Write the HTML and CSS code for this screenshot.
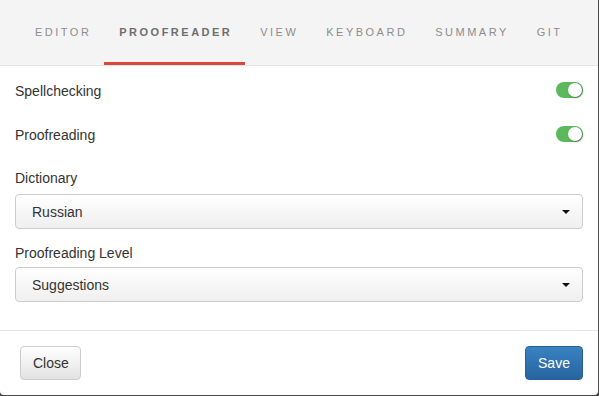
FILE: index.html
```html
<!DOCTYPE html>
<html>
<head>
<meta charset="utf-8">
<link rel="stylesheet" href="styles.css">
</head>
<body>
<div class="modal">
  <nav class="tabs">
    <span class="tab">Editor</span>
    <span class="tab active">Proofreader</span>
    <span class="tab">View</span>
    <span class="tab">Keyboard</span>
    <span class="tab">Summary</span>
    <span class="tab">Git</span>
  </nav>
  <div class="content">
    <div class="switch-row first">
      <span class="label">Spellchecking</span>
      <span class="toggle"><span class="knob"></span></span>
    </div>
    <div class="switch-row second">
      <span class="label">Proofreading</span>
      <span class="toggle"><span class="knob"></span></span>
    </div>
    <div class="field dict">
      <div class="label">Dictionary</div>
      <div class="select"><span>Russian</span><span class="caret"></span></div>
    </div>
    <div class="field level">
      <div class="label">Proofreading Level</div>
      <div class="select"><span>Suggestions</span><span class="caret"></span></div>
    </div>
  </div>
  <div class="footer">
    <button class="btn btn-default">Close</button>
    <button class="btn btn-primary">Save</button>
  </div>
</div>
</body>
</html>
```
FILE: styles.css
```css
html, body {
  margin: 0;
  padding: 0;
}
body {
  background: #4b4b4b;
  font-family: "Liberation Sans", Arial, sans-serif;
  color: #333;
  width: 599px;
  height: 396px;
  overflow: hidden;
}
.modal {
  width: 598px;
  height: 395px;
  background: #fff;
  border-radius: 0 0 4px 4px;
  display: flex;
  flex-direction: column;
  overflow: hidden;
}
.tabs {
  display: flex;
  height: 65px;
  padding-left: 20px;
  background: #f4f4f4;
  border-bottom: 1px solid #e4e4e4;
}
.tab {
  box-sizing: border-box;
  height: 65px;
  padding: 1px 12.75px 0 15.15px;
  display: flex;
  align-items: center;
  text-transform: uppercase;
  font-size: 11px;
  letter-spacing: 2.5px;
  color: #8c8c8c;
  border-bottom: 3px solid transparent;
}
.tab:first-child {
  padding-left: 15px;
}
.tab.active {
  font-weight: bold;
  color: #6e6e6e;
  border-bottom-color: #d9483b;
}
.content {
  padding: 15px 15px 28px 15px;
  font-size: 14px;
  line-height: 20px;
}
.switch-row {
  display: flex;
  justify-content: space-between;
  align-items: center;
  height: 20px;
}
.switch-row.second {
  margin-top: 24px;
}
.toggle {
  width: 27px;
  height: 16px;
  border-radius: 8px;
  background: #5cb85c;
  position: relative;
  margin-top: -2px;
}
.knob {
  position: absolute;
  right: 1px;
  top: 1px;
  width: 14px;
  height: 14px;
  border-radius: 50%;
  background: #fff;
  box-shadow: 1px 1px 2px rgba(0,0,0,0.35);
}
.field.dict {
  margin-top: 23px;
}
.field.level {
  margin-top: 14px;
}
.field .label {
  margin-bottom: 6px;
}
.field.level .label {
  margin-bottom: 4px;
}
.select {
  box-sizing: border-box;
  height: 35px;
  border: 1px solid #ccc;
  border-radius: 4px;
  background: linear-gradient(#ffffff, #efefef);
  display: flex;
  align-items: center;
  justify-content: space-between;
  padding: 0 12px 0 16px;
  color: #333;
}
.caret {
  width: 0;
  height: 0;
  border-left: 4px solid transparent;
  border-right: 4px solid transparent;
  border-top: 4px solid #111;
}
.footer {
  border-top: 1px solid #e5e5e5;
  padding: 15px 15px 15px 20px;
  display: flex;
  justify-content: space-between;
}
.btn {
  font-family: "Liberation Sans", Arial, sans-serif;
  font-size: 14px;
  line-height: 20px;
  padding: 6px 12px;
  border-radius: 4px;
  margin: 0;
}
.btn-default {
  color: #333;
  border: 1px solid #ccc;
  background: linear-gradient(#ffffff, #e2e2e2);
  width: 61px;
}
.btn-primary {
  color: #fff;
  border: 1px solid #2b5f92;
  background: linear-gradient(#3a82c2, #2763a0);
  width: 58px;
}
```
